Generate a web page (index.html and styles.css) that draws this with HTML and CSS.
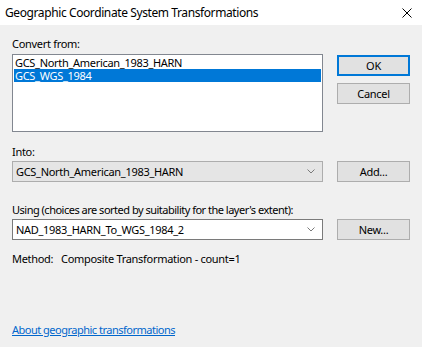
FILE: index.html
```html
<html>
<head>
    <title>Geographic Coordinate System Transformations</title>
    <link rel="stylesheet" href="styles.css">
</head>
<body>
    <div class="dialog">
        <div class="titlebar">
            <span class="title">Geographic Coordinate System Transformations</span>
            <svg class="close" width="10" height="10" viewBox="0 0 10 10">
                <path d="M0.5 0.5 L9.5 9.5 M9.5 0.5 L0.5 9.5" stroke="#000" stroke-width="1" fill="none"/>
            </svg>
        </div>

        <div class="content">
            <div class="top-row">
                <div class="left">
                    <div class="label">Convert from:</div>
                    <div class="listbox">
                        <div class="item">GCS_North_American_1983_HARN</div>
                        <div class="item selected">GCS_WGS_1984</div>
                    </div>
                </div>
                <div class="buttons">
                    <button class="btn default">OK</button>
                    <button class="btn">Cancel</button>
                </div>
            </div>

            <div class="label into-label">Into:</div>
            <div class="combo-row">
                <div class="combo readonly">
                    <span>GCS_North_American_1983_HARN</span>
                    <svg class="chevron" width="8" height="5" viewBox="0 0 8 5">
                        <path d="M0.5 0.5 L4 4 L7.5 0.5" stroke="#7a7a7a" fill="none"/>
                    </svg>
                </div>
                <button class="btn">Add...</button>
            </div>

            <div class="label using-label">Using (choices are sorted by suitability for the layer's extent):</div>
            <div class="combo-row">
                <div class="combo">
                    <span>NAD_1983_HARN_To_WGS_1984_2</span>
                    <svg class="chevron" width="8" height="5" viewBox="0 0 8 5">
                        <path d="M0.5 0.5 L4 4 L7.5 0.5" stroke="#7a7a7a" fill="none"/>
                    </svg>
                </div>
                <button class="btn">New...</button>
            </div>

            <div class="method"><span class="method-key">Method:</span><span>Composite Transformation - count=1</span></div>

            <a class="help-link" href="#">About geographic transformations</a>
        </div>
    </div>
</body>
</html>
```

FILE: styles.css
```css
body {
    margin: 0;
    font-family: "Noto Sans", "Open Sans", sans-serif;
    font-size: 11px;
    letter-spacing: -0.3px;
    color: #000;
    background: #f0f0f0;
}

.dialog {
    width: 422px;
    height: 347px;
    background: #f0f0f0;
}

.titlebar {
    height: 25px;
    background: #fff;
    display: flex;
    align-items: center;
    justify-content: space-between;
    padding: 0 10px 0 5px;
}

.title {
    font-size: 12px;
    letter-spacing: -0.4px;
    line-height: 15px;
}

.content {
    padding: 11px 12px 0 12px;
}

.label {
    line-height: 15px;
    height: 15px;
}

.top-row {
    display: flex;
    gap: 14px;
}

.left {
    width: 311px;
}

.listbox {
    margin-top: 3px;
    height: 74px;
    border: 1px solid #828790;
    background: #fff;
    padding: 1px;
}

.item {
    height: 13px;
    line-height: 13px;
    padding-left: 1px;
}

.item.selected {
    background: #0078d7;
    color: #fff;
}

.buttons {
    display: flex;
    flex-direction: column;
    gap: 7px;
    padding-top: 19px;
}

.btn {
    width: 73px;
    height: 21px;
    font-family: inherit;
    font-size: 11px;
    letter-spacing: -0.3px;
    background: #e1e1e1;
    border: 1px solid #adadad;
    padding: 0;
    color: #000;
}

.btn.default {
    border: 2px solid #0078d7;
}

.into-label {
    margin-top: 12px;
}

.using-label {
    margin-top: 20px;
    letter-spacing: -0.5px;
}

.combo-row {
    display: flex;
    gap: 14px;
    margin-top: 2px;
}

.combo {
    width: 311px;
    height: 21px;
    box-sizing: border-box;
    border: 1px solid #7a7a7a;
    background: #fff;
    display: flex;
    align-items: center;
    justify-content: space-between;
    padding: 0 7px 0 3px;
}

.combo.readonly {
    background: #e5e5e5;
    border-color: #adadad;
}

.method {
    margin-top: 11px;
    line-height: 15px;
}

.method-key {
    display: inline-block;
    width: 49px;
}

.help-link {
    display: block;
    margin-top: 56px;
    line-height: 15px;
    letter-spacing: -0.5px;
    color: #0066cc;
}
```
